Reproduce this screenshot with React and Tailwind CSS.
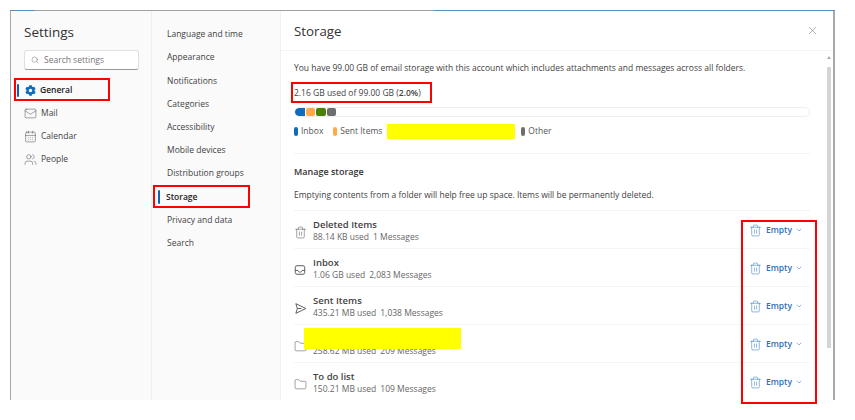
import React from 'react';
import { Mail, CalendarDays, Users, Search, X, Trash2, ChevronDown, Folder } from 'lucide-react';
import { FaCog } from 'react-icons/fa';

const middleNav = ['Language and time', 'Appearance', 'Notifications', 'Categories', 'Accessibility', 'Mobile devices', 'Distribution groups', 'Storage', 'Privacy and data', 'Search'];

const InboxIcon = () => (
  <svg width="12" height="12" viewBox="0 0 14 14" fill="none" stroke="#555" strokeWidth="1.1">
    <rect x="1.5" y="2" width="11" height="10" rx="2" />
    <path d="M1.5 7.5H4.5C5 9 6 9.5 7 9.5S9 9 9.5 7.5H12.5" />
  </svg>
);

const SendIcon = () => (
  <svg width="13" height="13" viewBox="0 0 14 14" fill="none" stroke="#555" strokeWidth="1" strokeLinejoin="round">
    <path d="M2 1.8L12.8 7L2 12.2L3.6 7ZM3.6 7H8" />
  </svg>
);

const folders = [
  { name: 'Deleted Items', used: '88.14 KB used', count: '1 Messages', icon: <Trash2 size={13} strokeWidth={1} color="#555" /> },
  { name: 'Inbox', used: '1.06 GB used', count: '2,083 Messages', icon: <InboxIcon /> },
  { name: 'Sent Items', used: '435.21 MB used', count: '1,038 Messages', icon: <SendIcon /> },
  { name: '', used: '258.62 MB used', count: '209 Messages', icon: <Folder size={13} strokeWidth={1} color="#555" /> },
  { name: 'To do list', used: '150.21 MB used', count: '109 Messages', icon: <Folder size={13} strokeWidth={1} color="#555" /> },
];

const LegendItem = ({ color, label }) => (
  <div className="flex items-center gap-[3px]">
    <span className={`w-[4px] h-[9px] rounded-full ${color}`} />
    <span>{label}</span>
  </div>
);

const RedBox = ({ className }) => <div className={`absolute border-[2px] border-[#ff0000] ${className}`} />;

export default function App() {
  return (
    <div className="relative w-[855px] h-[420px] bg-white overflow-hidden text-[#424242] text-[8.5px]" style={{ fontFamily: '"Open Sans", "Noto Sans", sans-serif' }}>
      <div className="pt-[10px] pl-[10px]">
        {/* window top edge: grey with blue ends */}
        <div className="flex w-[825px] h-px">
          <span className="w-[25px] bg-[#5b8db8]" />
          <span className="w-[400px] bg-[#a0a0a0]" />
          <span className="flex-1 bg-[#5b8db8]" />
        </div>
        <div className="flex w-[825px] h-[389px] border-l border-r-[2px] border-[#a8a8a8] bg-white overflow-hidden">
          {/* left nav */}
          <div className="w-[141px] shrink-0 bg-[#fafafa] border-r border-[#efefef] pl-[13px] pr-[12px] pt-[11px]">
            <h1 className="text-[13.5px] leading-[20px] text-[#333]">Settings</h1>
            <div className="mt-[8px] h-[20px] w-[115px] flex items-center gap-[5px] pl-[6px] bg-white border border-[#e0e0e0] border-b-[#999] rounded-[3px] text-[#777]">
              <Search size={8} strokeWidth={1.5} />
              <span>Search settings</span>
            </div>
            <div className="mt-[9px] -ml-[7px] flex flex-col">
              <div className="h-[23px] flex items-center font-semibold text-[#222]">
                <span className="w-[2px] h-[13px] bg-[#0f5fb5] rounded-full mr-[6px]" />
                <FaCog size={11} color="#0f6cbd" className="mr-[4px]" />
                General
              </div>
              <div className="h-[23px] flex items-center gap-[4px] pl-[7px]"><Mail size={13} strokeWidth={1} color="#555" />Mail</div>
              <div className="h-[23px] flex items-center gap-[4px] pl-[7px]"><CalendarDays size={13} strokeWidth={1} color="#555" />Calendar</div>
              <div className="h-[23px] flex items-center gap-[4px] pl-[7px]"><Users size={13} strokeWidth={1} color="#555" />People</div>
            </div>
          </div>

          {/* middle nav */}
          <div className="w-[128px] shrink-0 bg-[#fafafa] pt-[12px] flex flex-col">
            {middleNav.map(item => (
              <div key={item} className={`h-[23.2px] shrink-0 flex items-center ${item === 'Storage' ? 'font-semibold text-[#222] pl-[6px]' : 'pl-[15px]'}`}>
                {item === 'Storage' && <span className="w-[2px] h-[14px] bg-[#0f5fb5] rounded-full mr-[6px]" />}
                {item}
              </div>
            ))}
          </div>

          {/* content */}
          <div className="flex-1 min-w-0 flex flex-col border-l border-[#f0f0f0]">
            <div className="h-[40px] shrink-0 flex items-center justify-between pl-[13px] pr-[14px] border-b border-[#f3f3f3]">
              <h2 className="text-[13.3px] pt-[2px] text-[#333]">Storage</h2>
              <X size={13} strokeWidth={0.9} color="#666" />
            </div>
            <div className="flex flex-1 min-h-0">
              <div className="w-[532px] pl-[13px] overflow-hidden">
                <p className="mt-[10px] leading-[13px]">You have 99.00 GB of email storage with this account which includes attachments and messages across all folders.</p>
                <p className="mt-[12px] leading-[13px]">2.16 GB used of 99.00 GB (<b className="font-semibold">2.0%</b>)</p>
                <div className="mt-[8px] h-[10px] w-[516px] flex gap-px border border-[#eee] rounded-full overflow-hidden">
                  <span className="w-[10px] bg-[#0f6cbd] rounded-l-full" />
                  <span className="w-[9px] bg-[#ffaa44] rounded-[2px]" />
                  <span className="w-[10px] bg-[#498205] rounded-[2px]" />
                  <span className="w-[9px] bg-[#6e6e6e] rounded-[2px]" />
                </div>
                <div className="mt-[8px] h-[13px] flex items-center gap-[10px] text-[#555]">
                  <LegendItem color="bg-[#0f6cbd]" label="Inbox" />
                  <LegendItem color="bg-[#ffaa44]" label="Sent Items" />
                  <div className="w-[119px]" />
                  <LegendItem color="bg-[#6e6e6e]" label="Other" />
                </div>
                <div className="mt-[15px] w-[516px] border-t border-[#f3f3f3]" />
                <h3 className="mt-[11px] font-semibold text-[9px] text-[#333] leading-[13px]">Manage storage</h3>
                <p className="mt-[10px] leading-[13px]">Emptying contents from a folder will help free up space. Items will be permanently deleted.</p>
                <div className="mt-[9px] w-[516px] border-t border-[#f3f3f3]">
                  {folders.map(f => (
                    <div key={f.used} className="h-[38px] flex items-center border-b border-[#f5f5f5]">
                      <span className="w-[19px] shrink-0 flex pt-[5px]">{f.icon}</span>
                      <div className="flex-1 min-w-0 pt-[1px]">
                        <div className="h-[13px] leading-[13px] font-semibold text-[9.5px] text-[#444]">{f.name}</div>
                        <div className="h-[12px] leading-[12px] text-[#666] flex gap-[4px]"><span>{f.used}</span><span>{f.count}</span></div>
                      </div>
                      <div className="flex items-center gap-[3px] pr-[7px] pt-[1px] text-[#2f6fbb] font-semibold">
                        <Trash2 size={13} strokeWidth={1} color="#2f78c4" className="mr-[1px]" />
                        <span>Empty</span>
                        <ChevronDown size={8} strokeWidth={1.5} />
                      </div>
                    </div>
                  ))}
                </div>
              </div>
              {/* scrollbar */}
              <div className="flex-1 flex flex-col items-end pr-[2px] pt-[5px]">
                <div className="w-[4px] h-[3px] flex justify-center text-[#aaa]">
                  <svg width="4" height="3" viewBox="0 0 4 3"><path d="M2 0L4 3H0Z" fill="currentColor" /></svg>
                </div>
                <div className="mt-[8px] w-[4px] h-[281px] bg-[#d4d4d4]" />
              </div>
            </div>
          </div>
        </div>
      </div>

      {/* annotations laid over the screenshot */}
      <RedBox className="left-[14px] top-[78px] w-[96px] h-[23px]" />
      <RedBox className="left-[153px] top-[185px] w-[97px] h-[23px]" />
      <RedBox className="left-[291px] top-[82px] w-[141px] h-[21px]" />
      <RedBox className="left-[741px] top-[220px] w-[76px] h-[184px]" />
      <div className="absolute left-[387px] top-[124px] w-[128px] h-[15px] bg-[#ffff00]" />
      <div className="absolute left-[304px] top-[328px] w-[157px] h-[21px] bg-[#ffff00]" />
    </div>
  );
}
